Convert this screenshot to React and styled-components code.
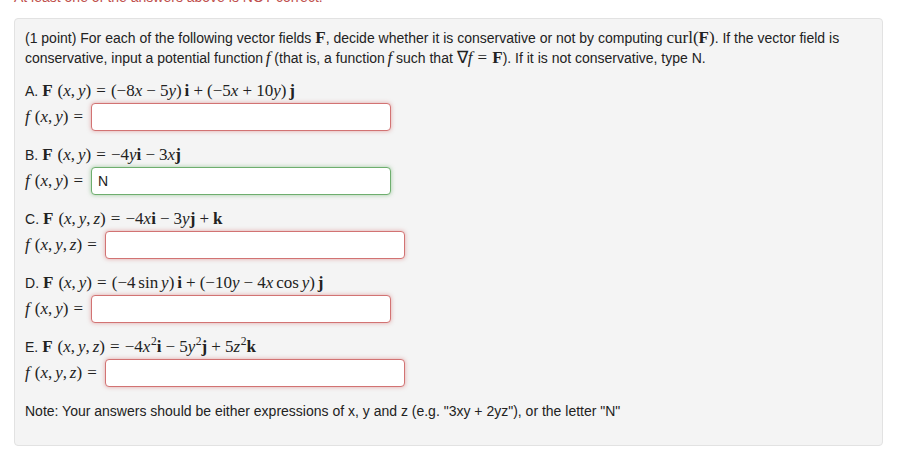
import React from "react";
import styled, { createGlobalStyle } from "styled-components";

const GlobalStyle = createGlobalStyle`
  html, body {
    margin: 0;
    padding: 0;
    background: #ffffff;
  }
  body {
    font-family: "Liberation Sans", Arial, Helvetica, sans-serif;
    font-size: 14px;
    color: #222;
    overflow: hidden;
  }
`;

const Page = styled.div`
  padding: 0 33px 0 14px;
`;

const Alert = styled.div`
  color: #c0504d;
  font-size: 14px;
  line-height: 20px;
  margin-top: -13px;
  margin-bottom: 11px;
`;

const Panel = styled.div`
  box-sizing: border-box;
  width: 869px;
  height: 428px;
  background: #f4f4f4;
  border: 1px solid #e2e2e2;
  border-radius: 4px;
  padding: 9px 10px 22px 10px;
`;

const Intro = styled.p`
  margin: 0 0 13px 0;
  line-height: 20px;
`;

const Problem = styled.div`
  margin-bottom: 14px;
`;

const Title = styled.div`
  line-height: 20px;
  white-space: nowrap;
`;

const AnswerRow = styled.div`
  display: flex;
  align-items: center;
  gap: 8px;
  margin-top: 2px;
`;

const AnswerInput = styled.input`
  box-sizing: border-box;
  width: 300px;
  height: 28px;
  padding: 4px 6px;
  border-radius: 4px;
  background: #fff;
  font-family: "Liberation Sans", Arial, sans-serif;
  font-size: 14px;
  color: #222;
  outline: none;
  border: 1px solid
    ${(p) => (p.$state === "correct" ? "#6eae6e" : "#d27373")};
  box-shadow: 0 0 4px
    ${(p) =>
      p.$state === "correct"
        ? "rgba(90, 170, 90, 0.55)"
        : "rgba(210, 90, 90, 0.5)"};
`;

const Note = styled.p`
  margin: 0;
  line-height: 20px;
`;

/* math typesetting */
const M = styled.span`
  font-family: "Liberation Serif", "Times New Roman", serif;
  font-size: 17px;
  white-space: nowrap;
  margin-left: ${(p) => (p.$lead ? "0.15em" : "0")};
`;

const V = styled.i`
  font-style: italic;
`;

const B = styled.b`
  font-weight: bold;
`;

const Rel = styled.span`
  margin: 0 0.3em;
`;

const Op = styled.span`
  margin: 0 0.24em;
`;

const Thin = styled.span`
  margin-left: ${(p) => (p.$wide ? "0.3em" : "0.17em")};
`;

const Sup = styled.sup`
  font-size: 0.68em;
  line-height: 0;
  vertical-align: 0.6em;
  margin-left: 0.05em;
`;

const Args = ({ vars }) => (
  <>
    (
    {vars.map((v, i) => (
      <React.Fragment key={v}>
        {i > 0 && (
          <>
            ,<Thin />
          </>
        )}
        <V>{v}</V>
      </React.Fragment>
    ))}
    )
  </>
);

const FOf = ({ vars }) => (
  <>
    <B>F</B>
    <Thin $wide />
    <Args vars={vars} />
    <Rel>=</Rel>
  </>
);

const Label = ({ vars }) => (
  <M>
    <V>f</V>
    <Thin $wide />
    <Args vars={vars} />
    <Rel style={{ marginRight: 0 }}>=</Rel>
  </M>
);

const problems = [
  {
    letter: "A",
    vars: ["x", "y"],
    state: "wrong",
    value: "",
    rhs: (
      <>
        (−8<V>x</V>
        <Op>−</Op>5<V>y</V>)<Thin />
        <B>i</B>
        <Op>+</Op>(−5<V>x</V>
        <Op>+</Op>10<V>y</V>)<Thin />
        <B>j</B>
      </>
    ),
  },
  {
    letter: "B",
    vars: ["x", "y"],
    state: "correct",
    value: "N",
    rhs: (
      <>
        −4<V>y</V>
        <B>i</B>
        <Op>−</Op>3<V>x</V>
        <B>j</B>
      </>
    ),
  },
  {
    letter: "C",
    vars: ["x", "y", "z"],
    state: "wrong",
    value: "",
    rhs: (
      <>
        −4<V>x</V>
        <B>i</B>
        <Op>−</Op>3<V>y</V>
        <B>j</B>
        <Op>+</Op>
        <B>k</B>
      </>
    ),
  },
  {
    letter: "D",
    vars: ["x", "y"],
    state: "wrong",
    value: "",
    rhs: (
      <>
        (−4<Thin />sin<Thin />
        <V>y</V>)<Thin />
        <B>i</B>
        <Op>+</Op>(−10<V>y</V>
        <Op>−</Op>4<V>x</V>
        <Thin />cos<Thin />
        <V>y</V>)<Thin />
        <B>j</B>
      </>
    ),
  },
  {
    letter: "E",
    vars: ["x", "y", "z"],
    state: "wrong",
    value: "",
    rhs: (
      <>
        −4<V>x</V>
        <Sup>2</Sup>
        <B>i</B>
        <Op>−</Op>5<V>y</V>
        <Sup>2</Sup>
        <B>j</B>
        <Op>+</Op>5<V>z</V>
        <Sup>2</Sup>
        <B>k</B>
      </>
    ),
  },
];

export default function App() {
  return (
    <>
      <GlobalStyle />
      <Page>
        <Alert>At least one of the answers above is NOT correct.</Alert>
        <Panel>
          <Intro>
            (1 point) For each of the following vector fields{" "}
            <M>
              <B>F</B>
            </M>
            , decide whether it is conservative or not by computing{" "}
            <M>
              curl(<B>F</B>)
            </M>
            . If the vector field is conservative, input a potential function
            <M $lead>
              <V>f</V>
            </M>{" "}
            (that is, a function
            <M $lead>
              <V>f</V>
            </M>{" "}
            such that{" "}
            <M>
              ∇<V>f</V>
              <Rel>=</Rel>
              <B>F</B>
            </M>
            ). If it is not conservative, type N.
          </Intro>

          {problems.map((p) => (
            <Problem key={p.letter}>
              <Title>
                {p.letter}.{" "}
                <M>
                  <FOf vars={p.vars} />
                  {p.rhs}
                </M>
              </Title>
              <AnswerRow>
                <Label vars={p.vars} />
                <AnswerInput
                  $state={p.state}
                  defaultValue={p.value}
                  aria-label={`answer ${p.letter}`}
                />
              </AnswerRow>
            </Problem>
          ))}

          <Note>
            Note: Your answers should be either expressions of x, y and z (e.g.
            "3xy + 2yz"), or the letter "N"
          </Note>
        </Panel>
      </Page>
    </>
  );
}
